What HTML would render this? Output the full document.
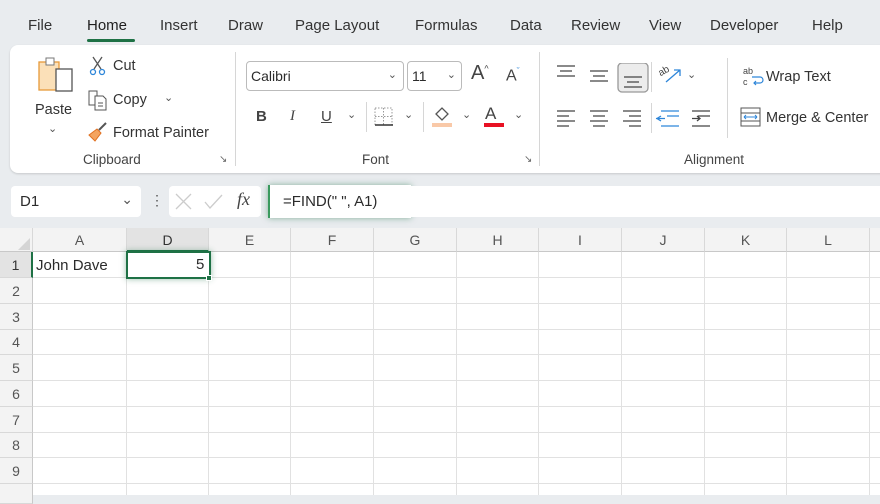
<!DOCTYPE html>
<html><head><meta charset="utf-8"><style>
*{margin:0;padding:0;box-sizing:border-box}
body{width:880px;height:495px;overflow:hidden;background:#e9ecef;font-family:"Liberation Sans",sans-serif;color:#2b2b2b;position:relative}
.a{position:absolute;white-space:nowrap}
.tab{font-size:15px;top:17px;color:#333}
.rb{font-size:14.5px;color:#333}
.gl{font-size:13.5px;color:#444;top:152px}
.sep{position:absolute;width:1px;background:#d6d6d6}
.grid{position:absolute;left:0;top:228px;width:880px;height:267px;background:#fff}
.ch{position:absolute;top:0;height:24px;background:#f3f3f3;border-right:1px solid #d8d8d8;border-bottom:1px solid #c8c8c8;font-size:14px;color:#555;text-align:center;line-height:24px}
.rh{position:absolute;left:0;width:33px;background:#f3f3f3;border-right:1px solid #c8c8c8;border-bottom:1px solid #d8d8d8;font-size:14px;color:#555;text-align:center}
.vl{position:absolute;top:24px;bottom:0;width:1px;background:#e1e1e1}
.hl{position:absolute;left:33px;right:0;height:1px;background:#e1e1e1}
.chev{font-size:11px;color:#555}
</style></head><body>
<div class="a tab" style="left:28px">File</div>
<div class="a tab" style="left:87px;color:#1f1f1f">Home</div>
<div class="a" style="left:87px;top:39px;width:48px;height:3px;background:#1e7145;border-radius:2px"></div>
<div class="a tab" style="left:160px">Insert</div>
<div class="a tab" style="left:228px">Draw</div>
<div class="a tab" style="left:295px">Page Layout</div>
<div class="a tab" style="left:415px">Formulas</div>
<div class="a tab" style="left:510px">Data</div>
<div class="a tab" style="left:571px">Review</div>
<div class="a tab" style="left:649px">View</div>
<div class="a tab" style="left:710px">Developer</div>
<div class="a tab" style="left:812px">Help</div>

<div class="a" style="left:10px;top:45px;width:900px;height:128px;background:#fff;border-radius:8px;box-shadow:0 1px 2px rgba(0,0,0,.15)"></div>
<svg class="a" style="left:36px;top:56px" width="40" height="42"><rect x="3" y="6" width="20" height="28" fill="#fbe0b8" stroke="#e69a3a" stroke-width="1.3"/><rect x="10" y="2" width="8" height="7" fill="#fff" stroke="#777"/><rect x="20" y="13" width="16" height="22" fill="#fff" stroke="#555" stroke-width="1.3"/></svg>
<div class="a rb" style="left:35px;top:102px">Paste</div>
<div class="a chev" style="left:48px;top:122px">⌄</div>
<svg class="a" style="left:89px;top:55px" width="18" height="22"><path d="M4 2L12 14M13 2L5 14" stroke="#555" stroke-width="1.3" fill="none"/><circle cx="4" cy="17" r="2.5" stroke="#2e86d9" fill="none" stroke-width="1.3"/><circle cx="13" cy="17" r="2.5" stroke="#2e86d9" fill="none" stroke-width="1.3"/></svg>
<div class="a rb" style="left:113px;top:58px">Cut</div>
<svg class="a" style="left:87px;top:89px" width="22" height="22"><path d="M2 2h8v14H2z" fill="none" stroke="#555"/><path d="M8 7h8l3 3v11H8z" fill="#fff" stroke="#555"/><path d="M11 14h5M11 17h5" stroke="#555"/></svg>
<div class="a rb" style="left:113px;top:92px">Copy</div>
<div class="a chev" style="left:164px;top:91px">⌄</div>
<svg class="a" style="left:87px;top:121px" width="22" height="22"><path d="M2 14l8-6 4 4-6 8z" fill="#f4a460" stroke="#e07020"/><path d="M12 9l7-7" stroke="#555" stroke-width="2"/></svg>
<div class="a rb" style="left:113px;top:125px">Format Painter</div>
<div class="a gl" style="left:83px">Clipboard</div>
<div class="a" style="left:219px;top:154px;font-size:10px;color:#666">↘</div>
<div class="sep" style="left:235px;top:52px;height:114px"></div>

<div class="a" style="left:246px;top:61px;width:158px;height:30px;border:1px solid #bbb;border-radius:4px;font-size:14px;padding:6px 4px">Calibri<span style="position:absolute;right:6px;top:6px" class="chev">⌄</span></div>
<div class="a" style="left:407px;top:61px;width:55px;height:30px;border:1px solid #bbb;border-radius:4px;font-size:14px;padding:6px 4px">11<span style="position:absolute;right:5px;top:6px" class="chev">⌄</span></div>
<div class="a" style="left:471px;top:62px;font-size:20px;color:#444">A<sup style="font-size:9px">^</sup></div>
<div class="a" style="left:506px;top:66px;font-size:16px;color:#444">A<sup style="font-size:9px;color:#2e86d9">ˇ</sup></div>
<div class="a" style="left:256px;top:108px;font-size:15px;font-weight:bold;color:#444">B</div>
<div class="a" style="left:290px;top:108px;font-size:15px;font-style:italic;font-family:'Liberation Serif';color:#444">I</div>
<div class="a" style="left:321px;top:108px;font-size:15px;text-decoration:underline;color:#444">U</div>
<div class="a chev" style="left:347px;top:108px">⌄</div>
<div class="sep" style="left:366px;top:102px;height:30px"></div>
<svg class="a" style="left:374px;top:107px" width="20" height="20"><rect x="1" y="1" width="17" height="17" fill="none" stroke="#999" stroke-dasharray="1.5 1.5"/><path d="M9.5 1v17M1 9.5h17" stroke="#999" stroke-dasharray="1.5 1.5"/><path d="M1 18h18" stroke="#333" stroke-width="1.5"/></svg>
<div class="a chev" style="left:404px;top:108px">⌄</div>
<div class="sep" style="left:423px;top:102px;height:30px"></div>
<svg class="a" style="left:431px;top:104px" width="22" height="24"><path d="M5 10l6-6 6 6-6 6z" fill="none" stroke="#555" stroke-width="1.3"/><rect x="1" y="19" width="20" height="4" fill="#f9c9a8"/></svg>
<div class="a chev" style="left:462px;top:108px">⌄</div>
<div class="a" style="left:485px;top:104px;font-size:17px;color:#444">A</div>
<div class="a" style="left:484px;top:123px;width:20px;height:4px;background:#e81123"></div>
<div class="a chev" style="left:514px;top:108px">⌄</div>
<div class="a gl" style="left:362px">Font</div>
<div class="a" style="left:524px;top:154px;font-size:10px;color:#666">↘</div>
<div class="sep" style="left:539px;top:52px;height:114px"></div>

<svg class="a" style="left:555px;top:63px" width="160" height="70" stroke="#444" stroke-width="1.3" fill="none">
<path d="M2 3h18M5 8h12M2 13h18"/>
<path d="M35 8h18M38 13h12M35 18h18"/>
<rect x="63" y="0" width="30" height="29" rx="4" fill="#ececec" stroke="#999"/>
<path d="M69 14h18M72 19h12M69 24h18"/>
<path d="M2 48h18M2 53h12M2 58h18M2 63h12"/>
<path d="M35 48h18M38 53h12M35 58h18M38 63h12"/>
<path d="M68 48h18M74 53h12M68 58h18M74 63h12"/>
<path d="M106 48h18M112 53h12M106 63h18M106 53l-4 2.5l4 2.5M101 55.5h9" stroke="#2e86d9"/>
<path d="M137 48h18M143 53h12M137 63h18M137 55.5h8M142 53l3 2.5-3 2.5" />
</svg>
<div class="sep" style="left:651px;top:62px;height:30px"></div>
<div class="sep" style="left:651px;top:103px;height:30px"></div>
<svg class="a" style="left:658px;top:62px" width="28" height="24"><text x="1" y="11" font-size="10" fill="#444" font-family="Liberation Sans" transform="rotate(-30 8 10)">ab</text><path d="M8 20l14-12M16 8h6v6" stroke="#2e86d9" fill="none" stroke-width="1.3"/></svg>
<div class="a chev" style="left:687px;top:68px">⌄</div>
<div class="sep" style="left:727px;top:58px;height:80px"></div>
<svg class="a" style="left:742px;top:65px" width="22" height="24"><text x="1" y="9" font-size="9" fill="#444" font-family="Liberation Sans">ab</text><text x="1" y="20" font-size="9" fill="#444" font-family="Liberation Sans">c</text><path d="M10 12h8a3 3 0 0 1 0 6h-6m2-2l-2 2 2 2" stroke="#2e86d9" fill="none" stroke-width="1.2"/></svg>
<div class="a rb" style="left:766px;top:69px">Wrap Text</div>
<svg class="a" style="left:740px;top:107px" width="22" height="20"><rect x="1" y="1" width="19" height="18" fill="none" stroke="#555"/><path d="M1 6h19M1 14h19" stroke="#555"/><path d="M4 10h13M4 10l2-2M4 10l2 2M17 10l-2-2M17 10l-2 2" stroke="#2e86d9"/></svg>
<div class="a rb" style="left:766px;top:110px">Merge &amp; Center</div>
<div class="a gl" style="left:684px">Alignment</div>

<div class="a" style="left:11px;top:186px;width:130px;height:31px;background:#fff;border-radius:4px;font-size:15px;padding:7px 9px">D1<span style="position:absolute;right:8px;top:5px;font-size:14px;color:#555">⌄</span></div>
<div class="a" style="left:150px;top:192px;font-size:14px;color:#555">⋮</div>
<div class="a" style="left:169px;top:186px;width:92px;height:31px;background:#fff;border-radius:4px"></div>
<svg class="a" style="left:175px;top:193px" width="55" height="18" stroke="#ccc" stroke-width="1.3" fill="none"><path d="M1 1l15 15M16 1L1 16M30 9l5 6 12-13"/></svg>
<div class="a" style="left:237px;top:189px;font-size:18px;font-style:italic;font-family:'Liberation Serif';color:#444">fx</div>
<div class="a" style="left:268px;top:185px;width:143px;height:33px;background:#fff;box-shadow:0 0 6px rgba(30,113,69,.5);border-left:2px solid #3a9a5e"></div>
<div class="a" style="left:283px;top:193px;font-size:15px">=FIND(" ", A1)</div>
<div class="a" style="left:411px;top:186px;width:470px;height:31px;background:#fff"></div>

<div class="grid">
<div class="ch" style="left:0;width:33px"></div>
<svg class="a" style="left:18px;top:10px" width="12" height="12"><path d="M12 0v12H0z" fill="#d5d5d5"/></svg>
<div class="ch" style="left:33px;width:94px">A</div>
<div class="ch" style="left:127px;width:82px;background:#e3e3e3;border-bottom:2px solid #1e7145;color:#333">D</div>
<div class="ch" style="left:209px;width:82px">E</div>
<div class="ch" style="left:291px;width:83px">F</div>
<div class="ch" style="left:374px;width:83px">G</div>
<div class="ch" style="left:457px;width:82px">H</div>
<div class="ch" style="left:539px;width:83px">I</div>
<div class="ch" style="left:622px;width:83px">J</div>
<div class="ch" style="left:705px;width:82px">K</div>
<div class="ch" style="left:787px;width:83px">L</div>
<div class="ch" style="left:870px;width:20px"></div>
<div class="vl" style="left:126px"></div><div class="vl" style="left:208px"></div><div class="vl" style="left:290px"></div><div class="vl" style="left:373px"></div><div class="vl" style="left:456px"></div><div class="vl" style="left:538px"></div><div class="vl" style="left:621px"></div><div class="vl" style="left:704px"></div><div class="vl" style="left:786px"></div><div class="vl" style="left:869px"></div>
<div class="hl" style="top:49px"></div><div class="hl" style="top:75px"></div><div class="hl" style="top:101px"></div><div class="hl" style="top:126px"></div><div class="hl" style="top:152px"></div><div class="hl" style="top:178px"></div><div class="hl" style="top:204px"></div><div class="hl" style="top:229px"></div><div class="hl" style="top:255px"></div>
<div class="rh" style="top:24px;height:26px;line-height:26px;background:#e3e3e3;border-right:2px solid #1e7145;color:#333">1</div>
<div class="rh" style="top:50px;height:26px;line-height:26px">2</div>
<div class="rh" style="top:76px;height:26px;line-height:26px">3</div>
<div class="rh" style="top:102px;height:25px;line-height:25px">4</div>
<div class="rh" style="top:127px;height:26px;line-height:26px">5</div>
<div class="rh" style="top:153px;height:26px;line-height:26px">6</div>
<div class="rh" style="top:179px;height:26px;line-height:26px">7</div>
<div class="rh" style="top:205px;height:25px;line-height:25px">8</div>
<div class="rh" style="top:230px;height:26px;line-height:26px">9</div>
<div class="rh" style="top:256px;height:20px"></div>
<div class="a" style="left:36px;top:29px;font-size:15px">John Dave</div>
<div class="a" style="left:126px;top:23px;width:85px;height:28px;border:2px solid #1e7145;box-shadow:0 0 6px rgba(30,113,69,.45);background:#fff"></div>
<div class="a" style="left:196px;top:28px;font-size:15px">5</div>
<div class="a" style="left:206px;top:47px;width:6px;height:6px;background:#1e7145;border:1px solid #fff"></div>
</div>
</body></html>
